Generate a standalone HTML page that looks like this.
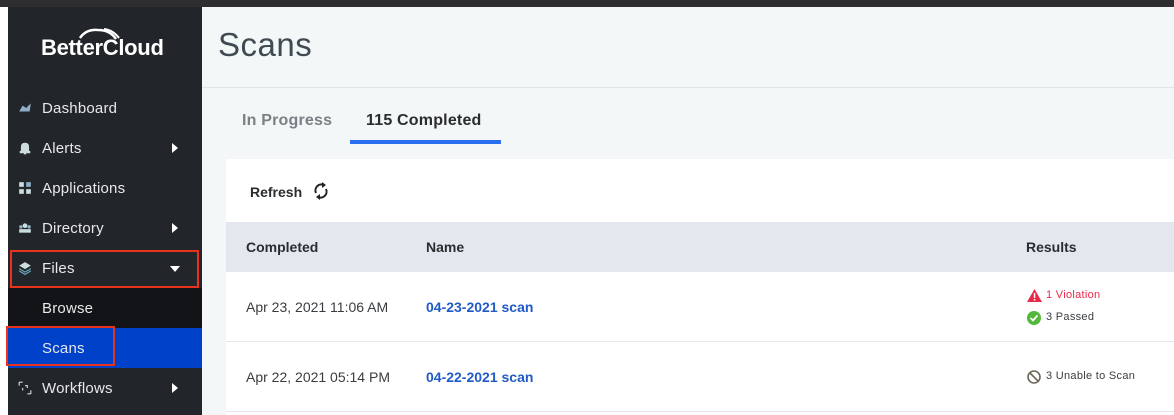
<!DOCTYPE html><html><head><style>
*{margin:0;padding:0;box-sizing:border-box}
body{width:1174px;height:415px;overflow:hidden;background:#f4f7f8;font-family:"Liberation Sans",sans-serif;position:relative}
.abs{position:absolute}
.top{left:0;top:0;width:1174px;height:7px;background:#2e2e31}
.side{left:8px;top:7px;width:194px;height:408px;background:#222529}
.lw{left:0;top:7px;width:8px;height:408px;background:#fff}
.item{position:absolute;left:8px;width:194px;height:40px;color:#e6e8ea;font-size:15px;line-height:42px;padding-left:34px;letter-spacing:0.2px}
.ic{position:absolute;left:10px;top:13px;width:14px;height:14px}
.arr{position:absolute;right:24px;top:15px;width:0;height:0;border-top:5px solid transparent;border-bottom:5px solid transparent;border-left:6px solid #fff}
.down{position:absolute;right:22px;top:18px;border-left:5px solid transparent;border-right:5px solid transparent;border-top:6px solid #fff}
.red{position:absolute;border:2px solid #e8321c}
</style></head><body>
<div class="abs top"></div>
<div class="abs lw"></div>
<div class="abs side"></div>
<div class="abs" style="left:41px;top:35px;color:#fff;font-size:22px;font-weight:bold;letter-spacing:-0.3px">BetterCloud</div>
<svg class="abs" style="left:76px;top:25px" width="46" height="16"><path d="M4 13 Q10 4 22 5 Q34 5 40 14" stroke="#fff" stroke-width="2.5" fill="none"/><path d="M28 4 Q37 5 43 13" stroke="#fff" stroke-width="2" fill="none"/></svg>
<div class="item" style="top:88px"><svg class="ic" viewBox="0 0 12 12"><path d="M1 9 L4 4 L7 6 L11 2 L10 9Z" fill="#8fb0c8"/></svg>Dashboard</div>
<div class="item" style="top:128px"><svg class="ic" viewBox="0 0 12 12"><path d="M3 9 V5 Q3 2 6 2 Q9 2 9 5 V9 H10 V10 H2 V9Z M5 11 H7" fill="#cdd" stroke="#cdd"/></svg>Alerts<span class="arr"></span></div>
<div class="item" style="top:168px"><svg class="ic" viewBox="0 0 12 12"><rect x="1" y="1" width="4" height="4" fill="#cdd"/><rect x="7" y="1" width="4" height="4" fill="#8fb0c8"/><rect x="1" y="7" width="4" height="4" fill="#cdd"/><rect x="7" y="7" width="4" height="4" fill="#cdd"/></svg>Applications</div>
<div class="item" style="top:208px"><svg class="ic" viewBox="0 0 12 12"><circle cx="2.5" cy="5" r="1.5" fill="#8fb0c8"/><circle cx="6" cy="4" r="2" fill="#cdd"/><circle cx="9.5" cy="5" r="1.5" fill="#8fb0c8"/><rect x="1" y="7" width="10" height="3" fill="#cdd"/></svg>Directory<span class="arr"></span></div>
<div class="item" style="top:248px"><svg class="ic" viewBox="0 0 12 12"><path d="M6 1 L11 4 L6 7 L1 4Z" fill="#cdd"/><path d="M1 6.5 L6 9.5 L11 6.5" stroke="#6ab" fill="none"/><path d="M1 8.5 L6 11.5 L11 8.5" stroke="#6ab" fill="none"/></svg>Files<span class="down"></span></div>
<div class="item" style="top:288px;background:#121417">Browse</div>
<div class="item" style="top:328px;background:#0041c9">Scans</div>
<div class="item" style="top:368px"><svg class="ic" viewBox="0 0 12 12"><path d="M1 1 H4 M1 1 V4 M11 11 H8 M11 11 V8 M6 4 H8 V6 M4 8 V6" stroke="#cdd" fill="none"/></svg>Workflows<span class="arr"></span></div>
<div class="red" style="left:10px;top:250px;width:189px;height:38px"></div>
<div class="red" style="left:6px;top:326px;width:109px;height:40px"></div>

<div class="abs" style="left:218px;top:26px;font-size:33px;color:#3f4a52;letter-spacing:0.5px">Scans</div>
<div class="abs" style="left:202px;top:87px;width:972px;height:1px;background:#e1e5e8"></div>
<div class="abs" style="left:242px;top:112px;font-size:16px;font-weight:bold;color:#7a8085;letter-spacing:0.2px">In Progress</div>
<div class="abs" style="left:366px;top:112px;font-size:16px;font-weight:bold;color:#2a2d30;letter-spacing:0.2px">115 Completed</div>
<div class="abs" style="left:350px;top:140px;width:151px;height:4px;background:#2970f0"></div>

<div class="abs" style="left:226px;top:159px;width:948px;height:256px;background:#fff"></div>
<div class="abs" style="left:250px;top:184px;font-size:14px;font-weight:bold;color:#2a2d30">Refresh</div>
<svg class="abs" style="left:312px;top:181px" width="18" height="20" viewBox="0 0 18 20"><path d="M4 12 A6 6 0 0 1 12 4" stroke="#222" stroke-width="2" fill="none"/><path d="M10 1 L14 4 L10 7Z" fill="#222"/><path d="M14 8 A6 6 0 0 1 6 16" stroke="#222" stroke-width="2" fill="none"/><path d="M8 13 L4 16 L8 19Z" fill="#222"/></svg>
<div class="abs" style="left:226px;top:222px;width:948px;height:50px;background:#e4e8ee"></div>
<div class="abs" style="left:246px;top:239px;font-size:14px;font-weight:bold;color:#2a2d30">Completed</div>
<div class="abs" style="left:426px;top:239px;font-size:14px;font-weight:bold;color:#2a2d30">Name</div>
<div class="abs" style="left:1026px;top:239px;font-size:14px;font-weight:bold;color:#2a2d30">Results</div>
<div class="abs" style="left:226px;top:341px;width:948px;height:1px;background:#e4e8ea"></div>
<div class="abs" style="left:226px;top:411px;width:948px;height:1px;background:#e4e8ea"></div>
<div class="abs" style="left:246px;top:299px;font-size:14px;color:#3a3d40">Apr 23, 2021 11:06 AM</div>
<div class="abs" style="left:426px;top:299px;font-size:14px;font-weight:bold;color:#1f5ac7">04-23-2021 scan</div>
<div class="abs" style="left:246px;top:369px;font-size:14px;color:#3a3d40">Apr 22, 2021 05:14 PM</div>
<div class="abs" style="left:426px;top:369px;font-size:14px;font-weight:bold;color:#1f5ac7">04-22-2021 scan</div>
<svg class="abs" style="left:1027px;top:289px" width="15" height="13"><path d="M7.5 0 L15 13 H0Z" fill="#e8294a"/><rect x="6.8" y="4" width="1.5" height="5" fill="#fff"/><rect x="6.8" y="10" width="1.5" height="1.5" fill="#fff"/></svg>
<div class="abs" style="left:1046px;top:289px;font-size:11px;color:#e8294a;letter-spacing:0.3px">1 Violation</div>
<svg class="abs" style="left:1027px;top:311px" width="14" height="14"><circle cx="7" cy="7" r="7" fill="#52b83a"/><path d="M3.5 7 L6 9.5 L10.5 4.5" stroke="#fff" stroke-width="1.8" fill="none"/></svg>
<div class="abs" style="left:1046px;top:311px;font-size:11px;color:#3a3d40;letter-spacing:0.3px">3 Passed</div>
<svg class="abs" style="left:1027px;top:370px" width="14" height="14"><circle cx="7" cy="7" r="6" stroke="#6e6658" stroke-width="1.6" fill="none"/><path d="M3 3 L11 11" stroke="#6e6658" stroke-width="1.6"/></svg>
<div class="abs" style="left:1046px;top:370px;font-size:11px;color:#3a3d40;letter-spacing:0.3px">3 Unable to Scan</div>
</body></html>
